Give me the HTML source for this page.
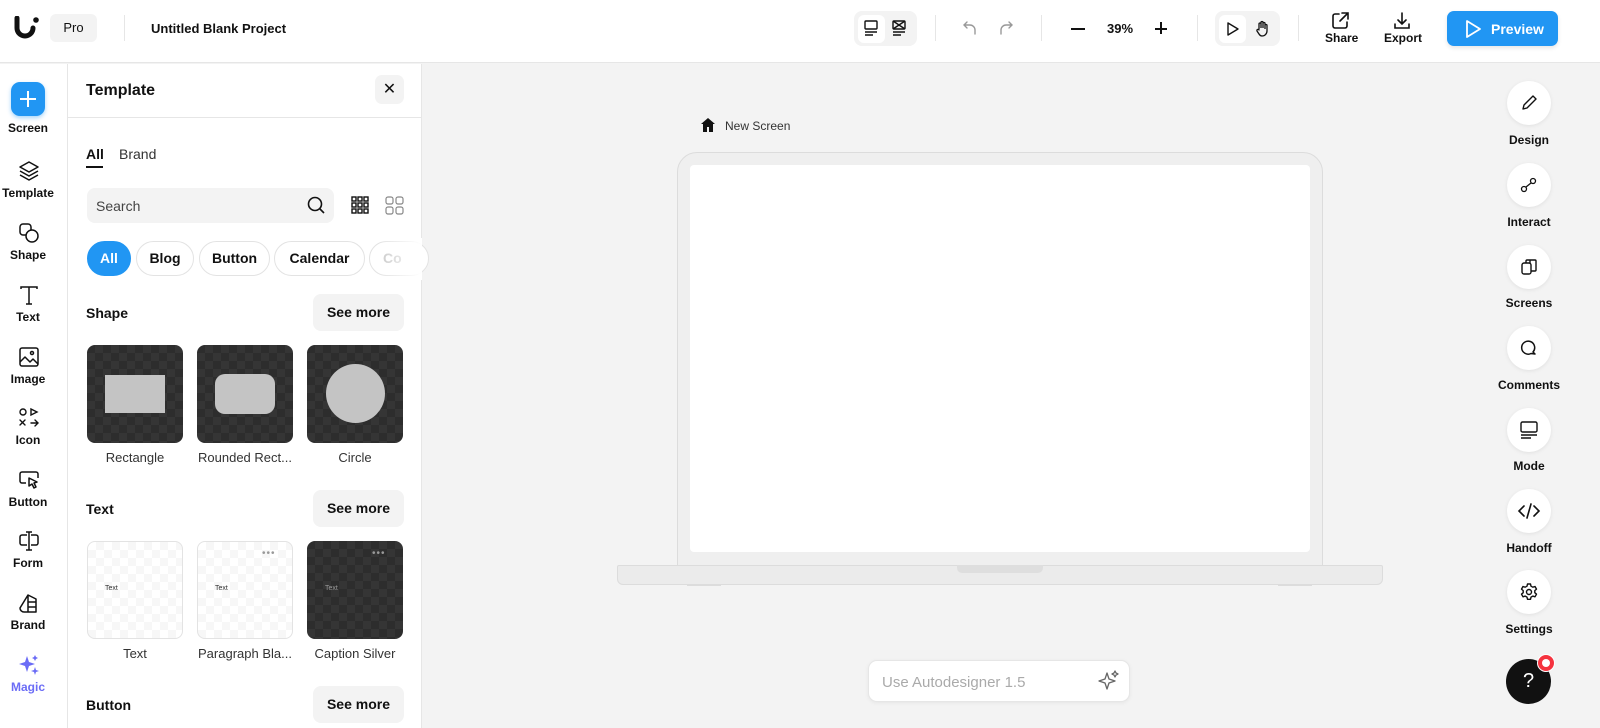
<!DOCTYPE html>
<html><head><meta charset="utf-8"><style>
*{box-sizing:border-box;margin:0;padding:0}
body{width:1600px;height:728px;overflow:hidden;font-family:"Liberation Sans",sans-serif;color:#111;background:#f3f3f3;position:relative}
.a{position:absolute}
.hdr{left:0;top:0;width:1600px;height:63px;background:#fff;border-bottom:1px solid #e6e6e6}
.rail{left:0;top:64px;width:68px;height:664px;background:#fff;border-right:1px solid #e6e6e6}
.panel{left:68px;top:64px;width:354px;height:664px;background:#fff;border-right:1px solid #e6e6e6}
.ri{position:absolute;left:0;width:56px;text-align:center;font-size:12px;font-weight:bold}
.ic{position:absolute;left:16px}
.rr{position:absolute;left:1507px;width:44px;height:44px;border-radius:50%;background:#fff;box-shadow:0 1px 4px rgba(0,0,0,.08)}
.rl{position:absolute;left:1479px;width:100px;text-align:center;font-size:12px;font-weight:bold}
.chip{position:absolute;top:241px;height:35px;border:1px solid #e3e3e3;border-radius:18px;font-size:14px;font-weight:bold;line-height:33px;text-align:center;background:#fff}
.sm{position:absolute;left:313px;width:91px;height:37px;background:#f3f3f3;border-radius:8px;font-size:14px;font-weight:bold;text-align:center;line-height:37px}
.tile{position:absolute;width:96px;height:98px;border-radius:8px;background:#2d2d2d;background-image:linear-gradient(45deg,#353535 25%,transparent 25%,transparent 75%,#353535 75%),linear-gradient(45deg,#353535 25%,transparent 25%,transparent 75%,#353535 75%);background-size:16px 16px;background-position:0 0,8px 8px}
.wt{background-color:#fff;border:1px solid #e3e3e3;background-image:linear-gradient(45deg,#f7f7f7 25%,transparent 25%,transparent 75%,#f7f7f7 75%),linear-gradient(45deg,#f7f7f7 25%,transparent 25%,transparent 75%,#f7f7f7 75%)}
.cap{position:absolute;width:110px;text-align:center;font-size:13px;color:#333}
.sec{position:absolute;left:86px;font-size:14px;font-weight:bold}
.tt{position:absolute;font-size:7px;color:#333}
.dots{position:absolute;font-size:10px;color:#999;letter-spacing:1px}
</style></head><body>
<div class="a hdr"></div>
<!-- logo -->
<svg class="a" style="left:14px;top:16px" width="28" height="24" viewBox="0 0 28 24"><path d="M3 2v10a8 8 0 0 0 16 0" fill="none" stroke="#111" stroke-width="5" stroke-linecap="round"/><circle cx="22" cy="4" r="2.8" fill="#111"/></svg>
<div class="a" style="left:50px;top:14px;width:47px;height:28px;background:#f3f3f3;border-radius:6px;font-size:13px;line-height:28px;text-align:center">Pro</div>
<div class="a" style="left:124px;top:15px;width:1px;height:26px;background:#e6e6e6"></div>
<div class="a" style="left:151px;top:21px;font-size:13px;font-weight:bold">Untitled Blank Project</div>
<div class="a" style="left:854px;top:11px;width:63px;height:35px;background:#f3f3f3;border-radius:8px"></div>
<div class="a" style="left:858px;top:15px;width:27px;height:28px;background:#fff;border-radius:6px"></div>
<svg class="a" style="left:864px;top:20px" width="14" height="16" viewBox="0 0 14 16" fill="none" stroke="#111" stroke-width="1.4"><rect x="1" y="1" width="12" height="8" rx="1"/><path d="M1 12h12M1 15h8"/></svg>
<svg class="a" style="left:892px;top:20px" width="14" height="16" viewBox="0 0 14 16" fill="none" stroke="#111" stroke-width="1.4"><rect x="1" y="1" width="12" height="8" rx="1"/><path d="M1 1l12 8M13 1L1 9M1 12h12M1 15h8"/></svg>
<div class="a" style="left:935px;top:15px;width:1px;height:26px;background:#e6e6e6"></div>
<svg class="a" style="left:962px;top:20px" width="16" height="16" viewBox="0 0 16 16" fill="none" stroke="#999" stroke-width="1.4" stroke-linecap="round"><path d="M5 2L2 5l3 3M2 5h6a5 5 0 0 1 5 5v4"/></svg>
<svg class="a" style="left:998px;top:20px" width="16" height="16" viewBox="0 0 16 16" fill="none" stroke="#999" stroke-width="1.4" stroke-linecap="round"><path d="M11 2l3 3-3 3M14 5H8a5 5 0 0 0-5 5v4"/></svg>
<div class="a" style="left:1041px;top:15px;width:1px;height:26px;background:#e6e6e6"></div>
<div class="a" style="left:1071px;top:28px;width:14px;height:2px;background:#111"></div>
<div class="a" style="left:1107px;top:21px;font-size:13px;font-weight:bold">39%</div>
<div class="a" style="left:1155px;top:28px;width:12px;height:2px;background:#111"></div><div class="a" style="left:1160px;top:22px;width:2px;height:12px;background:#111"></div>
<div class="a" style="left:1197px;top:15px;width:1px;height:26px;background:#e6e6e6"></div>
<div class="a" style="left:1215px;top:11px;width:65px;height:35px;background:#f3f3f3;border-radius:8px"></div>
<div class="a" style="left:1219px;top:15px;width:27px;height:28px;background:#fff;border-radius:6px"></div>
<svg class="a" style="left:1226px;top:21px" width="14" height="16" viewBox="0 0 14 16" fill="none" stroke="#111" stroke-width="1.4" stroke-linejoin="round"><path d="M2 2l10 6-10 6z"/></svg>
<svg class="a" style="left:1255px;top:20px" width="14" height="17" viewBox="0 0 14 17" fill="none" stroke="#111" stroke-width="1.3" stroke-linecap="round"><path d="M4 9V4a1 1 0 0 1 2 0v4V2.5a1 1 0 0 1 2 0V8V3.5a1 1 0 0 1 2 0V9V5.5a1 1 0 0 1 2 0V11a5 5 0 0 1-5 5H7a4 4 0 0 1-3-2L2 11a1 1 0 0 1 2-1"/></svg>
<div class="a" style="left:1298px;top:15px;width:1px;height:26px;background:#e6e6e6"></div>
<svg class="a" style="left:1330px;top:11px" width="20" height="20" viewBox="0 0 20 20" fill="none" stroke="#111" stroke-width="1.6" stroke-linecap="round"><path d="M9 3H5a2 2 0 0 0-2 2v10a2 2 0 0 0 2 2h10a2 2 0 0 0 2-2v-4M12 2h6v6M18 2l-8 8"/></svg>
<div class="a" style="left:1325px;top:31px;font-size:12px;font-weight:bold">Share</div>
<svg class="a" style="left:1392px;top:11px" width="20" height="20" viewBox="0 0 20 20" fill="none" stroke="#111" stroke-width="1.6" stroke-linecap="round"><path d="M10 2v11M6 9l4 4 4-4M3 13v4h14v-4"/></svg>
<div class="a" style="left:1384px;top:31px;font-size:12px;font-weight:bold">Export</div>
<div class="a" style="left:1447px;top:11px;width:111px;height:35px;background:#2196f3;border-radius:7px;box-shadow:0 2px 4px rgba(0,0,0,.1)"></div>
<svg class="a" style="left:1464px;top:19px" width="18" height="20" viewBox="0 0 18 20" fill="none" stroke="#fff" stroke-width="1.8" stroke-linejoin="round"><path d="M3 2l13 8-13 8z"/></svg>
<div class="a" style="left:1491px;top:21px;font-size:14px;font-weight:bold;color:#fff">Preview</div>

<div class="a rail"></div>
<div class="a" style="left:11px;top:82px;width:34px;height:34px;background:#2196f3;border-radius:9px;box-shadow:0 2px 4px rgba(33,150,243,.4)"></div>
<div class="a" style="left:27px;top:91px;width:2px;height:16px;background:#fff"></div><div class="a" style="left:20px;top:98px;width:16px;height:2px;background:#fff"></div>
<div class="ri" style="top:121px">Screen</div>
<svg class="a" style="left:18px;top:160px" width="22" height="22" viewBox="0 0 22 22" fill="none" stroke="#111" stroke-width="1.5" stroke-linejoin="round"><path d="M11 2l9 5-9 5-9-5zM2 11l9 5 9-5M2 15l9 5 9-5"/></svg>
<div class="ri" style="top:186px">Template</div>
<svg class="a" style="left:18px;top:222px" width="22" height="22" viewBox="0 0 22 22" fill="none" stroke="#111" stroke-width="1.5"><rect x="2" y="2" width="11" height="11" rx="3"/><circle cx="14" cy="14" r="6" fill="#fff"/></svg>
<div class="ri" style="top:248px">Shape</div>
<svg class="a" style="left:18px;top:284px" width="22" height="22" viewBox="0 0 22 22" fill="none" stroke="#111" stroke-width="1.5"><path d="M3 5V3h16v2M11 3v17M8 20h6"/></svg>
<div class="ri" style="top:310px">Text</div>
<svg class="a" style="left:18px;top:346px" width="22" height="22" viewBox="0 0 22 22" fill="none" stroke="#111" stroke-width="1.5" stroke-linejoin="round"><rect x="2" y="2" width="18" height="18" rx="2"/><path d="M2 16l5-5 5 5 3-3 5 5"/><circle cx="14" cy="7" r="1.5"/></svg>
<div class="ri" style="top:372px">Image</div>
<svg class="a" style="left:18px;top:407px" width="22" height="22" viewBox="0 0 22 22" fill="none" stroke="#111" stroke-width="1.4" stroke-linecap="round"><circle cx="5" cy="5" r="3"/><path d="M13 2l6 3-6 3zM2 13l5 5M7 13l-5 5M13 16h7M17 13l3 3-3 3"/></svg>
<div class="ri" style="top:433px">Icon</div>
<svg class="a" style="left:18px;top:469px" width="22" height="22" viewBox="0 0 22 22" fill="none" stroke="#111" stroke-width="1.5" stroke-linejoin="round"><path d="M8 14H4a2 2 0 0 1-2-2V5a2 2 0 0 1 2-2h14a2 2 0 0 1 2 2v4"/><path d="M11 9l8 4-3 1 2 4-2 1-2-4-3 2z"/></svg>
<div class="ri" style="top:495px">Button</div>
<svg class="a" style="left:18px;top:530px" width="22" height="22" viewBox="0 0 22 22" fill="none" stroke="#111" stroke-width="1.5"><path d="M9 5H4a2 2 0 0 0-2 2v6a2 2 0 0 0 2 2h5M13 5h5a2 2 0 0 1 2 2v6a2 2 0 0 1-2 2h-5M11 2v18M8 2h6M8 20h6"/></svg>
<div class="ri" style="top:556px">Form</div>
<svg class="a" style="left:18px;top:592px" width="22" height="22" viewBox="0 0 22 22" fill="none" stroke="#111" stroke-width="1.5" stroke-linejoin="round"><path d="M2 16l8-13 8 4v13H6a4 4 0 0 1-4-4zM10 3v17M10 10h8M10 15h8"/></svg>
<div class="ri" style="top:618px">Brand</div>
<svg class="a" style="left:17px;top:654px" width="24" height="22" viewBox="0 0 24 22" fill="#6b6cf6"><path d="M10 2l2 6 6 2-6 2-2 6-2-6-6-2 6-2z"/><path d="M18 13l1 3 3 1-3 1-1 3-1-3-3-1 3-1z"/><path d="M18 1l1 2 2 1-2 1-1 2-1-2-2-1 2-1z"/></svg>
<div class="ri" style="top:680px;color:#6b6cf6">Magic</div>

<div class="a panel"></div>
<div class="a" style="left:86px;top:82px;font-size:16px;font-weight:bold">Template</div>
<div class="a" style="left:375px;top:75px;width:29px;height:29px;background:#f3f3f3;border-radius:7px;font-size:16px;text-align:center;line-height:29px">✕</div>
<div class="a" style="left:68px;top:117px;width:354px;height:1px;background:#e6e6e6"></div>
<div class="a" style="left:86px;top:146px;font-size:14px;font-weight:bold">All</div>
<div class="a" style="left:86px;top:166px;width:17px;height:2px;background:#111"></div>
<div class="a" style="left:119px;top:146px;font-size:14px;color:#333">Brand</div>
<div class="a" style="left:87px;top:188px;width:247px;height:35px;background:#f3f3f3;border-radius:8px"></div>
<div class="a" style="left:96px;top:198px;font-size:14px;color:#444">Search</div>
<svg class="a" style="left:306px;top:195px" width="20" height="20" viewBox="0 0 20 20" fill="none" stroke="#111" stroke-width="1.6"><circle cx="9" cy="9" r="6.5"/><path d="M14 14l4 4"/></svg>
<svg class="a" style="left:351px;top:196px" width="18" height="18" viewBox="0 0 18 18" fill="none" stroke="#111" stroke-width="1.4"><g><rect x="1" y="1" width="4" height="4"/><rect x="7" y="1" width="4" height="4"/><rect x="13" y="1" width="4" height="4"/><rect x="1" y="7" width="4" height="4"/><rect x="7" y="7" width="4" height="4"/><rect x="13" y="7" width="4" height="4"/><rect x="1" y="13" width="4" height="4"/><rect x="7" y="13" width="4" height="4"/><rect x="13" y="13" width="4" height="4"/></g></svg>
<svg class="a" style="left:385px;top:196px" width="19" height="19" viewBox="0 0 19 19" fill="none" stroke="#888" stroke-width="1.2"><rect x="1" y="1" width="7" height="7" rx="2"/><rect x="11" y="1" width="7" height="7" rx="2"/><rect x="1" y="11" width="7" height="7" rx="2"/><rect x="11" y="11" width="7" height="7" rx="2"/></svg>
<div class="chip" style="left:87px;width:44px;background:#2196f3;border-color:#2196f3;color:#fff">All</div>
<div class="chip" style="left:136px;width:58px">Blog</div>
<div class="chip" style="left:199px;width:71px">Button</div>
<div class="chip" style="left:274px;width:91px">Calendar</div>
<div class="chip" style="left:369px;width:60px;color:#ccc;text-align:left;padding-left:13px">Co</div>
<div class="a" style="left:380px;top:238px;width:42px;height:42px;background:linear-gradient(90deg,rgba(255,255,255,0),#fff)"></div>

<div class="sec" style="top:305px">Shape</div><div class="sm" style="top:294px">See more</div>
<div class="tile" style="left:87px;top:345px"></div><div class="a" style="left:105px;top:375px;width:60px;height:38px;background:#c4c4c4"></div>
<div class="tile" style="left:197px;top:345px"></div><div class="a" style="left:215px;top:374px;width:60px;height:40px;background:#c4c4c4;border-radius:10px"></div>
<div class="tile" style="left:307px;top:345px"></div><div class="a" style="left:326px;top:364px;width:59px;height:59px;background:#c4c4c4;border-radius:50%"></div>
<div class="cap" style="left:80px;top:450px">Rectangle</div>
<div class="cap" style="left:190px;top:450px">Rounded Rect...</div>
<div class="cap" style="left:300px;top:450px">Circle</div>

<div class="sec" style="top:501px">Text</div><div class="sm" style="top:490px">See more</div>
<div class="tile wt" style="left:87px;top:541px"></div><div class="tt" style="left:105px;top:585px">Text</div>
<div class="tile wt" style="left:197px;top:541px"></div><div class="tt" style="left:215px;top:585px">Text</div><div class="dots" style="left:262px;top:548px">•••</div>
<div class="tile" style="left:307px;top:541px"></div><div class="tt" style="left:325px;top:585px;color:#999">Text</div><div class="dots" style="left:372px;top:548px">•••</div>
<div class="cap" style="left:80px;top:646px">Text</div>
<div class="cap" style="left:190px;top:646px">Paragraph Bla...</div>
<div class="cap" style="left:300px;top:646px">Caption Silver</div>
<div class="sec" style="top:697px">Button</div><div class="sm" style="top:686px">See more</div>

<!-- canvas -->
<svg class="a" style="left:700px;top:117px" width="16" height="16" viewBox="0 0 16 16" fill="#111"><path d="M8 1l7 6h-2v8h-4v-5H7v5H3V7H1z"/></svg>
<div class="a" style="left:725px;top:119px;font-size:12px;color:#333">New Screen</div>
<div class="a" style="left:677px;top:152px;width:646px;height:414px;background:#efefef;border:1px solid #dcdcdc;border-radius:20px 20px 0 0"></div>
<div class="a" style="left:690px;top:165px;width:620px;height:387px;background:#fff;border-radius:4px"></div>
<div class="a" style="left:617px;top:565px;width:766px;height:20px;background:#ebebeb;border:1px solid #dcdcdc;border-radius:2px 2px 6px 6px"></div>
<div class="a" style="left:957px;top:565px;width:86px;height:8px;background:#dedede;border-radius:0 0 5px 5px"></div>
<div class="a" style="left:687px;top:584px;width:34px;height:2px;background:#dcdcdc"></div>
<div class="a" style="left:1278px;top:584px;width:34px;height:2px;background:#dcdcdc"></div>

<div class="a" style="left:868px;top:660px;width:262px;height:42px;background:#fff;border:1px solid #e6e6e6;border-radius:9px;box-shadow:0 1px 4px rgba(0,0,0,.06)"></div>
<div class="a" style="left:882px;top:674px;font-size:15px;color:#aaa">Use Autodesigner 1.5</div>
<svg class="a" style="left:1097px;top:670px" width="24" height="22" viewBox="0 0 24 22" fill="none" stroke="#666" stroke-width="1.3" stroke-linejoin="round"><path d="M10 3l2 6 6 2-6 2-2 6-2-6-6-2 6-2z"/><path d="M18 1l1 2 2 1-2 1-1 2-1-2-2-1 2-1z"/></svg>

<!-- right rail -->
<div class="rr" style="top:81px"></div><svg class="a" style="left:1520px;top:94px" width="18" height="18" viewBox="0 0 18 18" fill="none" stroke="#111" stroke-width="1.4" stroke-linejoin="round"><path d="M3 15l1-4 9-9 3 3-9 9z"/></svg><div class="rl" style="top:133px">Design</div>
<div class="rr" style="top:163px"></div><svg class="a" style="left:1520px;top:176px" width="18" height="18" viewBox="0 0 18 18" fill="none" stroke="#111" stroke-width="1.3"><circle cx="4" cy="13" r="2.5"/><circle cx="13" cy="5" r="2.5"/><path d="M6 11l5-4"/></svg><div class="rl" style="top:215px">Interact</div>
<div class="rr" style="top:245px"></div><svg class="a" style="left:1520px;top:258px" width="18" height="18" viewBox="0 0 18 18" fill="none" stroke="#111" stroke-width="1.4"><rect x="2" y="5" width="9" height="11" rx="2"/><path d="M6 5V3a1 1 0 0 1 1-1h4M10 2h5a1 1 0 0 1 1 1v9a1 1 0 0 1-1 1h-4M10 2v3"/></svg><div class="rl" style="top:296px">Screens</div>
<div class="rr" style="top:326px"></div><svg class="a" style="left:1520px;top:339px" width="18" height="18" viewBox="0 0 18 18" fill="none" stroke="#111" stroke-width="1.5"><path d="M15 15l-2-2a6.5 6.5 0 1 0-2 1.5z" stroke-linejoin="round"/></svg><div class="rl" style="top:378px">Comments</div>
<div class="rr" style="top:408px"></div><svg class="a" style="left:1519px;top:420px" width="20" height="20" viewBox="0 0 20 20" fill="none" stroke="#111" stroke-width="1.4"><rect x="2" y="2" width="16" height="10" rx="1.5"/><path d="M2 15h16M2 18h10"/></svg><div class="rl" style="top:459px">Mode</div>
<div class="rr" style="top:489px"></div><svg class="a" style="left:1517px;top:502px" width="24" height="18" viewBox="0 0 24 18" fill="none" stroke="#111" stroke-width="1.6" stroke-linecap="round"><path d="M7 4L2 9l5 5M17 4l5 5-5 5M14 2l-4 14"/></svg><div class="rl" style="top:541px">Handoff</div>
<div class="rr" style="top:570px"></div><svg class="a" style="left:1519px;top:582px" width="20" height="20" viewBox="0 0 20 20" fill="none" stroke="#111" stroke-width="1.4"><circle cx="10" cy="10" r="2.5"/><path d="M8.5 2h3l.5 2.2 1.8 1 2.2-.7 1.5 2.6-1.7 1.5v2.1l1.7 1.5-1.5 2.6-2.2-.7-1.8 1-.5 2.2h-3l-.5-2.2-1.8-1-2.2.7-1.5-2.6 1.7-1.5V8.6L2.5 7.1 4 4.5l2.2.7 1.8-1z" stroke-linejoin="round"/></svg><div class="rl" style="top:622px">Settings</div>
<div class="a" style="left:1506px;top:659px;width:45px;height:45px;border-radius:50%;background:#111;color:#fff;font-size:20px;text-align:center;line-height:45px">?</div>
<div class="a" style="left:1537px;top:654px;width:18px;height:18px;border-radius:50%;background:#f5333f;border:1px solid #fff"></div>
<div class="a" style="left:1542px;top:659px;width:8px;height:8px;border-radius:50%;background:#fff"></div>
</body></html>
